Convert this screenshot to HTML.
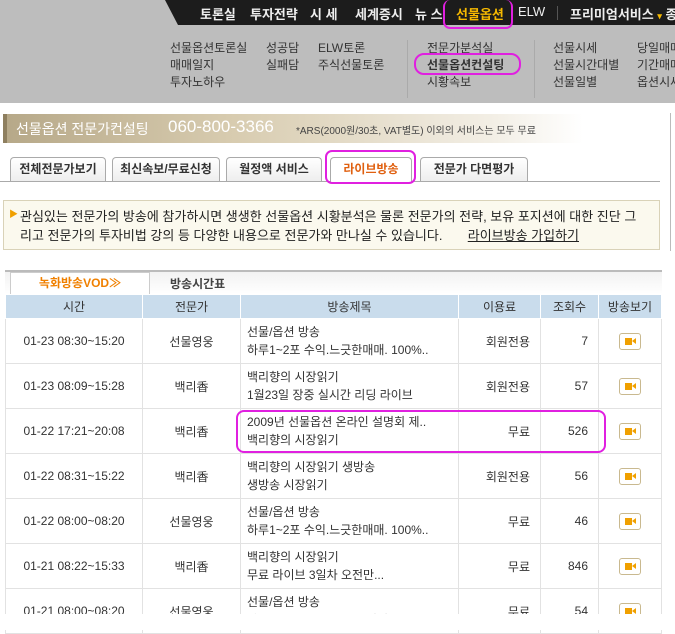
<!DOCTYPE html>
<html><head><meta charset="utf-8"><style>
*{margin:0;padding:0;box-sizing:border-box}
body{width:675px;height:630px;overflow:hidden;background:#fff;font-family:"Liberation Sans","Noto Sans CJK KR","NanumGothic",sans-serif;font-size:12px;color:#333;position:relative}
.a{position:absolute;white-space:nowrap}
.gray{left:0;top:0;width:675px;height:103px;background:#bdbdbd}
.nav{left:0;top:0;width:675px;height:25px}
.nv{top:4px;color:#eee;font-size:13px;font-weight:bold}
.sm{font-size:12px;color:#333;line-height:17px}
.mag{border:2px solid #e020e0;border-radius:7px}
.banner{left:3px;top:114px;width:580px;height:29px;background:linear-gradient(90deg,#b6a888,#d8ccb0 40%,#f3efe6 85%,#fff)}
.tab{top:157px;height:24px;border:1px solid #aaa;border-bottom:none;border-radius:4px 4px 0 0;background:linear-gradient(#fff,#eee);font-size:12px;font-weight:bold;color:#333;text-align:center;line-height:23px}
table{position:absolute;left:5px;top:294px;width:657px;border-collapse:collapse;font-size:12px}
td,th{border:1px solid #e2e2e2;height:45px;text-align:center;font-weight:normal}
th{background:#c9dcec;height:24px;color:#333;border-color:#fff}
td.t{text-align:left;padding-left:6px;line-height:18px}
td.r{text-align:right;padding-right:10px}
.cam{display:inline-block;width:22px;height:17px;border:1px solid #c9b98f;border-radius:3px;background:#fff;position:relative;vertical-align:middle}
.cam:before{content:"";position:absolute;left:5px;top:4px;width:7px;height:7px;background:#f0a000}
.cam:after{content:"";position:absolute;left:12px;top:4px;border-right:4px solid #f0a000;border-top:3.5px solid transparent;border-bottom:3.5px solid transparent}
</style></head><body>
<div class="a gray"></div>
<svg class="a nav" width="675" height="25"><polygon points="165,0 675,0 675,25 178,25" fill="#1c1c1c"/></svg>
<div class="a nv" style="left:200px">토론실</div>
<div class="a nv" style="left:250px">투자전략</div>
<div class="a nv" style="left:310px">시 세</div>
<div class="a nv" style="left:355px">세계증시</div>
<div class="a nv" style="left:415px">뉴 스</div>
<div class="a nv" style="left:456px;color:#f5b800">선물옵션</div>
<div class="a nv" style="left:518px;font-weight:normal">ELW</div>
<div class="a" style="left:557px;top:6px;width:1px;height:14px;background:#555"></div>
<div class="a nv" style="left:570px">프리미엄서비스 <span style="color:#f5b800;font-size:9px">▾</span> 종</div>
<div class="a mag" style="left:443px;top:0;width:70px;height:29px;border-top:none"></div>
<div class="a sm" style="left:170px;top:40px">선물옵션토론실<br>매매일지<br>투자노하우</div>
<div class="a sm" style="left:266px;top:40px">성공담<br>실패담</div>
<div class="a sm" style="left:318px;top:40px">ELW토론<br>주식선물토론</div>
<div class="a" style="left:407px;top:40px;width:1px;height:58px;background:#aaa"></div>
<div class="a sm" style="left:427px;top:40px">전문가분석실<br><b>선물옵션컨설팅</b><br>시황속보</div>
<div class="a mag" style="left:414px;top:53px;width:107px;height:22px;border-radius:10px"></div>
<div class="a" style="left:534px;top:40px;width:1px;height:58px;background:#aaa"></div>
<div class="a sm" style="left:553px;top:40px">선물시세<br>선물시간대별<br>선물일별</div>
<div class="a sm" style="left:637px;top:40px">당일매매<br>기간매매<br>옵션시세</div>

<div class="a banner"></div>
<div class="a" style="left:3px;top:114px;width:4px;height:29px;background:#8e7f5f"></div>
<div class="a" style="left:16px;top:119px;font-size:14px;color:#fff">선물옵션 전문가컨설팅</div>
<div class="a" style="left:168px;top:117px;font-size:17px;color:#fff">060-800-3366</div>
<div class="a" style="left:296px;top:122px;font-size:10px;color:#444">*ARS(2000원/30초, VAT별도) 이외의 서비스는 모두 무료</div>
<div class="a" style="left:670px;top:113px;width:1px;height:138px;background:#bbb"></div>

<div class="a" style="left:0;top:181px;width:660px;height:1px;background:#aaa"></div>
<div class="a tab" style="left:10px;width:96px">전체전문가보기</div>
<div class="a tab" style="left:112px;width:108px">최신속보/무료신청</div>
<div class="a tab" style="left:226px;width:96px">월정액 서비스</div>
<div class="a tab" style="left:330px;width:82px;color:#e06010;background:#fff;height:25px">라이브방송</div>
<div class="a mag" style="left:325px;top:150px;width:91px;height:34px"></div>
<div class="a tab" style="left:420px;width:108px">전문가 다면평가</div>

<div class="a" style="left:3px;top:200px;width:657px;height:50px;background:#fbf9ee;border:1px solid #d9d2b8"></div>
<div class="a" style="left:9px;top:207px;color:#f0a000;font-size:9px">▶</div>
<div class="a" style="left:20px;top:207px;font-size:13px;line-height:19px;color:#222">관심있는 전문가의 방송에 참가하시면 생생한 선물옵션 시황분석은 물론 전문가의 전략, 보유 포지션에 대한 진단 그<br>리고 전문가의 투자비법 강의 등 다양한 내용으로 전문가와 만나실 수 있습니다. &nbsp;&nbsp;&nbsp;&nbsp;&nbsp;&nbsp;<u>라이브방송 가입하기</u></div>

<div class="a" style="left:5px;top:270px;width:657px;height:24px;background:linear-gradient(#f2f2f2,#fff);border-top:2px solid #bbb"></div>
<div class="a" style="left:10px;top:272px;width:140px;height:23px;background:#fff;border:1px solid #ccc;border-bottom:none;text-align:center;line-height:21px;color:#f08000;font-weight:bold;font-size:12px">녹화방송VOD≫</div>
<div class="a" style="left:170px;top:275px;font-size:12px;font-weight:bold;color:#444">방송시간표</div>

<table>
<tr><th style="width:137px">시간</th><th style="width:98px">전문가</th><th style="width:218px">방송제목</th><th style="width:82px">이용료</th><th style="width:58px">조회수</th><th>방송보기</th></tr>
<tr><td>01-23 08:30~15:20</td><td>선물영웅</td><td class="t">선물/옵션 방송<br>하루1~2포 수익.느긋한매매. 100%..</td><td class="r">회원전용</td><td class="r">7</td><td><span class="cam"></span></td></tr>
<tr><td>01-23 08:09~15:28</td><td>백리香</td><td class="t">백리향의 시장읽기<br>1월23일 장중 실시간 리딩 라이브</td><td class="r">회원전용</td><td class="r">57</td><td><span class="cam"></span></td></tr>
<tr><td>01-22 17:21~20:08</td><td>백리香</td><td class="t">2009년 선물옵션 온라인 설명회 제..<br>백리향의 시장읽기</td><td class="r">무료</td><td class="r">526</td><td><span class="cam"></span></td></tr>
<tr><td>01-22 08:31~15:22</td><td>백리香</td><td class="t">백리향의 시장읽기 생방송<br>생방송 시장읽기</td><td class="r">회원전용</td><td class="r">56</td><td><span class="cam"></span></td></tr>
<tr><td>01-22 08:00~08:20</td><td>선물영웅</td><td class="t">선물/옵션 방송<br>하루1~2포 수익.느긋한매매. 100%..</td><td class="r">무료</td><td class="r">46</td><td><span class="cam"></span></td></tr>
<tr><td>01-21 08:22~15:33</td><td>백리香</td><td class="t">백리향의 시장읽기<br>무료 라이브 3일차 오전만...</td><td class="r">무료</td><td class="r">846</td><td><span class="cam"></span></td></tr>
<tr><td>01-21 08:00~08:20</td><td>선물영웅</td><td class="t">선물/옵션 방송<br>하루1~2포 수익.느긋한 매매. 100%..</td><td class="r">무료</td><td class="r">54</td><td><span class="cam"></span></td></tr>
</table>
<div class="a mag" style="left:236px;top:410px;width:370px;height:43px;border-radius:8px"></div>
<div class="a" style="left:0;top:614px;width:675px;height:16px;background:#fff"></div>
</body></html>
